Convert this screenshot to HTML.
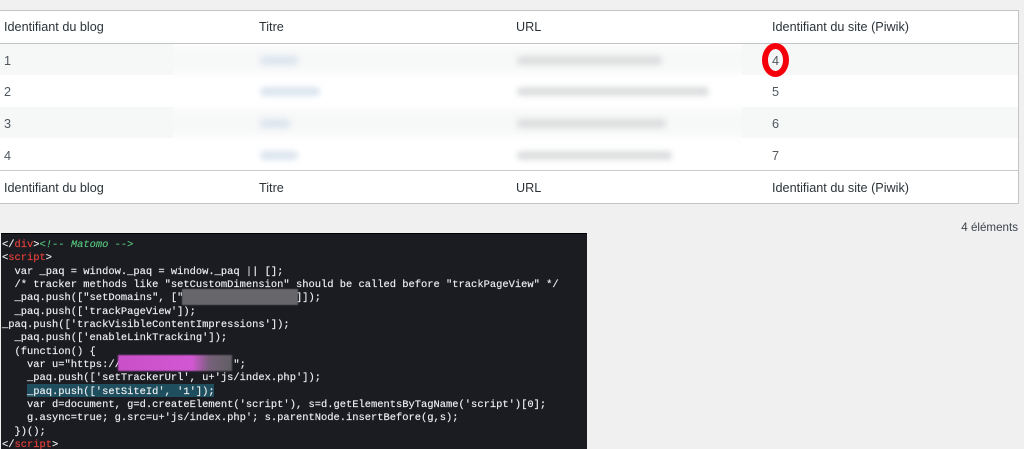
<!DOCTYPE html>
<html lang="fr">
<head>
<meta charset="utf-8">
<title>Matomo</title>
<style>
html,body{margin:0;padding:0;width:1024px;height:449px;overflow:hidden;background:#f0f0f1}
body{position:relative;font-family:"Liberation Sans",sans-serif}
.a{position:absolute}
.t{position:absolute;font-size:12.65px;line-height:16px;color:#2c3338;white-space:nowrap}
.n{color:#50575e}
.bl{position:absolute;height:9px;border-radius:4px;filter:blur(3px)}
.u{background:#dce5ef}
.g{background:#dcdedf}
pre{position:absolute;margin:0;left:2px;top:236px;padding-top:3px;font-family:"Liberation Mono",monospace;font-size:10.43px;line-height:13.34px;color:#eef0f2;white-space:pre;-webkit-text-stroke:.15px #eef0f2}
.r{color:#e8413a;-webkit-text-stroke:.15px #e8413a}.gr{color:#55c57a;font-style:italic;-webkit-text-stroke:.15px #55c57a}
</style>
</head>
<body>
<div class="a" style="left:-2px;top:10px;width:1019px;height:192px;background:#fff;border:1px solid #c3c4c7"></div>
<div class="a" style="left:0;top:43px;width:1018px;height:1px;background:#c3c4c7"></div>
<div class="a" style="left:0;top:170px;width:1018px;height:1px;background:#c9cacc"></div>
<div class="a" style="left:0;top:44px;width:173px;height:31px;background:#f6f7f7"></div>
<div class="a" style="left:0;top:107px;width:173px;height:31px;background:#f6f7f7"></div>
<div class="a" style="left:742px;top:44px;width:276px;height:31px;background:#f6f7f7"></div>
<div class="a" style="left:742px;top:107px;width:276px;height:31px;background:#f6f7f7"></div>
<div class="a" style="left:173px;top:44px;width:569px;height:126px;overflow:hidden">
  <div class="a" style="left:-20px;top:2px;width:610px;height:27px;background:#f7f8f8;filter:blur(4px)"></div>
  <div class="a" style="left:-20px;top:65px;width:610px;height:27px;background:#f7f8f8;filter:blur(4px)"></div>
</div>

<div class="t" style="left:4px;top:19px">Identifiant du blog</div>
<div class="t" style="left:259px;top:19px">Titre</div>
<div class="t" style="left:516px;top:19px">URL</div>
<div class="t" style="left:772px;top:19px">Identifiant du site (Piwik)</div>

<div class="t n" style="left:4px;top:53px">1</div>
<div class="t n" style="left:4px;top:84px">2</div>
<div class="t n" style="left:4px;top:116px">3</div>
<div class="t n" style="left:4px;top:148px">4</div>
<div class="t n" style="left:772px;top:53px">4</div>
<div class="t n" style="left:772px;top:84px">5</div>
<div class="t n" style="left:772px;top:116px">6</div>
<div class="t n" style="left:772px;top:148px">7</div>

<div class="bl u" style="left:260px;top:56px;width:38px"></div>
<div class="bl u" style="left:260px;top:87px;width:60px"></div>
<div class="bl u" style="left:260px;top:119px;width:30px"></div>
<div class="bl u" style="left:260px;top:151px;width:38px"></div>
<div class="bl g" style="left:517px;top:56px;width:145px"></div>
<div class="bl g" style="left:517px;top:87px;width:192px"></div>
<div class="bl g" style="left:517px;top:119px;width:149px"></div>
<div class="bl g" style="left:517px;top:151px;width:155px"></div>

<div class="a" style="left:762px;top:43px;width:27px;height:34px;box-sizing:border-box;border:6px solid #f5000a;border-radius:50%"></div>

<div class="t" style="left:4px;top:180px">Identifiant du blog</div>
<div class="t" style="left:259px;top:180px">Titre</div>
<div class="t" style="left:516px;top:180px">URL</div>
<div class="t" style="left:772px;top:180px">Identifiant du site (Piwik)</div>

<div class="t" style="right:6px;top:220px;color:#3c434a;font-size:11.6px">4 éléments</div>

<div class="a" style="left:1px;top:233px;width:586px;height:216px;background:#1b1b22;border-top:1px solid #000;box-sizing:border-box"></div>
<div class="a" style="left:27px;top:384px;width:187px;height:13px;background:#1f4f5e"></div>
<pre>&lt;/<span class="r">div</span>&gt;<span class="gr">&lt;!-- Matomo --&gt;</span>
&lt;<span class="r">script</span>&gt;
  var _paq = window._paq = window._paq || [];
  /* tracker methods like "setCustomDimension" should be called before "trackPageView" */
  _paq.push(["setDomains", ["                  ]]);
  _paq.push(['trackPageView']);
_paq.push(['trackVisibleContentImpressions']);
  _paq.push(['enableLinkTracking']);
  (function() {
    var u="https://                  ";
    _paq.push(['setTrackerUrl', u+'js/index.php']);
    _paq.push(['setSiteId', '1']);
    var d=document, g=d.createElement('script'), s=d.getElementsByTagName('script')[0];
    g.async=true; g.src=u+'js/index.php'; s.parentNode.insertBefore(g,s);
  })();
&lt;/<span class="r">script</span>&gt;</pre>
<div class="a" style="left:182px;top:289px;width:116px;height:16px;background:#66666b;filter:blur(.6px)"></div>
<div class="a" style="left:118px;top:355px;width:114px;height:16px;background:linear-gradient(90deg,#c94fc9 0,#d257d2 65%,#77607a 80%,#5f5f63 100%);filter:blur(.8px)"></div>
</body>
</html>
